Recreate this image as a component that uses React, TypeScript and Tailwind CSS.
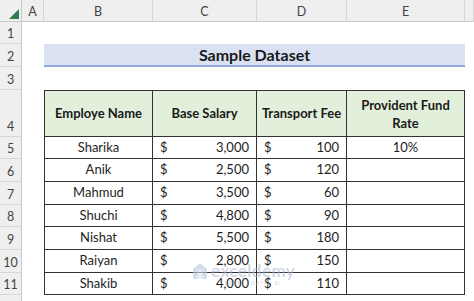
import React from "react";

const rowHeights = [22, 23, 23, 47, 22, 23, 23, 22, 23, 23, 22, 6];
const colLetters = ["A", "B", "C", "D", "E", ""];

const data: [string, string, string, string][] = [
  ["Sharika", "3,000", "100", "10%"],
  ["Anik", "2,500", "120", ""],
  ["Mahmud", "3,500", "60", ""],
  ["Shuchi", "4,800", "90", ""],
  ["Nishat", "5,500", "180", ""],
  ["Raiyan", "2,800", "150", ""],
  ["Shakib", "4,000", "110", ""],
];

const font = { fontFamily: "Lato, 'Open Sans', 'Liberation Sans', sans-serif" };

function RowHead({ n, last }: { n: string; last?: boolean }) {
  return (
    <div
      className={`col-start-1 flex items-end justify-center bg-[#efefef] border-r border-[#c8c8c8] ${
        last ? "" : "border-b border-b-[#d6d6d6]"
      } pb-[1px] text-[12.5px] leading-[16px] text-[#444]`}
    >
      {n}
    </div>
  );
}

export default function App() {
  return (
    <div className="relative w-[474px] h-[301px] overflow-hidden bg-white" style={font}>
      <div className="grid grid-cols-[22px_22px_109px_104px_90px_118px_9px] grid-rows-[22px_22px_23px_23px_47px_22px_23px_23px_22px_23px_23px_22px_6px]">
        {/* corner */}
        <div className="relative bg-[#efefef] border-r border-b border-[#c8c8c8]">
          <svg className="absolute left-[9px] top-[9px]" width="10" height="10" viewBox="0 0 10 10">
            <polygon points="10,0 10,10 0,10" fill="#2e7d4f" />
          </svg>
        </div>
        {colLetters.map((c, i) => (
          <div
            key={i}
            className="flex items-center justify-center pt-[3px] bg-[#efefef] border-b border-[#c8c8c8] border-r border-r-[#d6d6d6] text-[12.5px] text-[#444]"
          >
            {c}
          </div>
        ))}

        {/* row 1 */}
        <RowHead n="1" />
        <div className="col-span-6" />

        {/* row 2: title */}
        <RowHead n="2" />
        <div />
        <div className="col-span-4 flex items-center justify-center bg-[#d9e1f2] border-b-2 border-[#8ea9db] text-[16px] font-bold text-[#1a1a1a]">
          Sample Dataset
        </div>
        <div />

        {/* row 3 */}
        <RowHead n="3" />
        <div className="col-span-6" />

        {/* row 4: table header */}
        <RowHead n="4" />
        <div />
        <div className="flex items-center justify-center bg-[#e2efda] border border-[#333] text-[13px] font-bold text-[#1a1a1a]">
          Employe Name
        </div>
        <div className="flex items-center justify-center bg-[#e2efda] border-t border-r border-b border-[#333] text-[13px] font-bold text-[#1a1a1a]">
          Base Salary
        </div>
        <div className="flex items-center justify-center bg-[#e2efda] border-t border-r border-b border-[#333] text-[13px] font-bold text-[#1a1a1a]">
          Transport Fee
        </div>
        <div className="flex items-center justify-center text-center bg-[#e2efda] border-t border-r border-b border-[#333] text-[13px] leading-[18px] font-bold text-[#1a1a1a]">
          Provident Fund
          <br />
          Rate
        </div>
        <div />

        {data.map(([name, salary, fee, rate], i) => (
          <React.Fragment key={name}>
            <RowHead n={String(i + 5)} />
            <div />
            <div className="flex items-center justify-center border-l border-r border-b border-[#333] text-[13px] text-[#1e1e1e]">
              {name}
            </div>
            <div className="flex items-center justify-between px-[7px] border-r border-b border-[#333] text-[13px] text-[#1e1e1e]">
              <span>$</span>
              <span>{salary}</span>
            </div>
            <div className="flex items-center justify-between px-[7px] border-r border-b border-[#333] text-[13px] text-[#1e1e1e]">
              <span>$</span>
              <span>{fee}</span>
            </div>
            <div className="flex items-center justify-center border-r border-b border-[#333] text-[13px] text-[#1e1e1e]">
              {rate}
            </div>
            <div />
          </React.Fragment>
        ))}

        {/* row 12 partial */}
        <RowHead n="" last />
        <div className="col-span-6" />
      </div>

      {/* watermark */}
      <div className="pointer-events-none absolute left-[192px] top-[262px] flex items-start gap-[3px] opacity-60">
        <svg width="16" height="18" viewBox="0 0 16 18">
          <path d="M8 1 L15 7 L15 17 L1 17 L1 7 Z" fill="#b9c7dd" />
          <path d="M5 10 L8 7 L11 10 L11 17 L5 17 Z" fill="#dbe3ef" />
        </svg>
        <div className="flex flex-col items-center">
          <span className="text-[17px] leading-[18px] font-semibold tracking-[0.5px] text-[#aebcd6]">exceldemy</span>
          <span className="text-[5px] leading-[6px] tracking-[1px] text-[#b9c4d6]">EXCEL · DATA · BI</span>
        </div>
      </div>
    </div>
  );
}
